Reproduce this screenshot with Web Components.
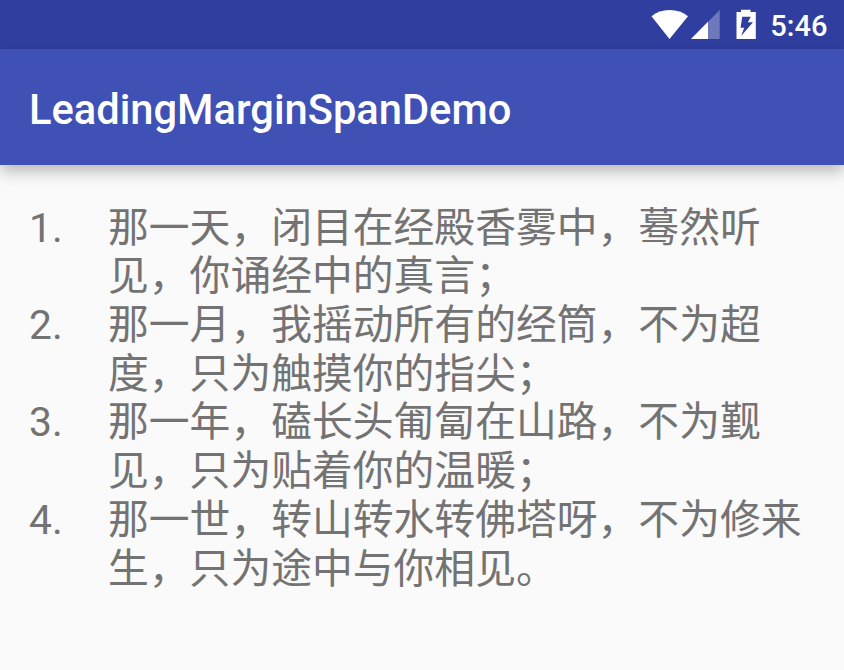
<!DOCTYPE html>
<html lang="zh-CN">
<head>
  <meta charset="UTF-8">
  <title>LeadingMarginSpanDemo</title>
  <style>
    body {
      margin: 0;
      min-height: 100vh;
      background-color: #fafafa;
      font-family: Roboto, "Noto Sans CJK SC", sans-serif;
    }
  </style>
</head>
<body>
  <app-screen>
    <status-bar slot="header">5:46</status-bar>
    <app-bar slot="header">LeadingMarginSpanDemo</app-bar>
    <verse-item number="1.">那一天，闭目在经殿香雾中，蓦然听见，你诵经中的真言；</verse-item>
    <verse-item number="2.">那一月，我摇动所有的经筒，不为超度，只为触摸你的指尖；</verse-item>
    <verse-item number="3.">那一年，磕长头匍匐在山路，不为觐见，只为贴着你的温暖；</verse-item>
    <verse-item number="4.">那一世，转山转水转佛塔呀，不为修来生，只为途中与你相见。</verse-item>
  </app-screen>

  <script>
    class StatusBar extends HTMLElement {
      constructor() {
        super()
        this.attachShadow({ mode: 'open' })
      }

      connectedCallback() {
        this.render()
      }

      render() {
        this.shadowRoot.innerHTML = `
          <style>
            :host {
              display: flex;
              justify-content: flex-end;
              align-items: center;
              box-sizing: border-box;
              height: 49px;
              padding-right: 16.6px;
              background-color: #303f9f;
              color: #fff;
              font-size: 29px;
              font-weight: 500;
              line-height: 49px;
            }
            svg {
              display: block;
              fill: currentColor;
            }
            .wifi {
              margin-right: 3px;
            }
            .signal {
              margin-right: 16px;
            }
            .battery {
              margin-right: 14.2px;
            }
            span {
              padding-top: 3px;
            }
          </style>
          <svg class="wifi" width="37" height="49" viewBox="0 0 37 49">
            <path d="M18.5 39 L0.5 16.2 C5.5 12 11.5 9.9 18.5 9.9 C25.5 9.9 32 12 37 16.2 Z" />
          </svg>
          <svg class="signal" width="29" height="49" viewBox="0 0 29 49">
            <path fill-opacity=".3" d="M0 39 L28.7 10 V39 Z" />
            <path d="M0 39 L17 21.8 V39 Z" />
          </svg>
          <svg class="battery" width="20" height="49" viewBox="0 0 20 49">
            <path fill-rule="evenodd" d="M0.5 12 H5 V9.7 H14.5 V12 H19.8 V39 H0.5 Z M6.2 16.8 L4.6 27.8 H8.2 L5.2 36 L17 22.2 H11.8 L14.8 16.8 Z" />
          </svg>
          <span><slot></slot></span>
        `
      }
    }

    customElements.define('status-bar', StatusBar)

    class AppBar extends HTMLElement {
      constructor() {
        super()
        this.attachShadow({ mode: 'open' })
      }

      connectedCallback() {
        this.render()
      }

      render() {
        this.shadowRoot.innerHTML = `
          <style>
            :host {
              display: flex;
              align-items: center;
              box-sizing: border-box;
              height: 116px;
              padding: 5px 29px 0;
              background-color: #3f51b5;
              box-shadow: 0 6px 15px rgba(0, 0, 0, 0.28);
              color: #fff;
            }
            h1 {
              margin: 0;
              font-size: 41.65px;
              font-weight: 500;
              line-height: 48px;
            }
          </style>
          <h1><slot></slot></h1>
        `
      }
    }

    customElements.define('app-bar', AppBar)

    class VerseItem extends HTMLElement {
      constructor() {
        super()
        this.attachShadow({ mode: 'open' })
      }

      connectedCallback() {
        this.render()
      }

      render() {
        this.shadowRoot.innerHTML = `
          <style>
            :host {
              display: grid;
              grid-template-columns: 79px 1fr;
              color: #737373;
              font-size: 40.8px;
              line-height: 48.7px;
            }
            p {
              margin: 0;
              text-spacing-trim: space-all;
            }
          </style>
          <span>${this.getAttribute('number')}</span>
          <p><slot></slot></p>
        `
      }
    }

    customElements.define('verse-item', VerseItem)

    class AppScreen extends HTMLElement {
      constructor() {
        super()
        this.attachShadow({ mode: 'open' })
      }

      connectedCallback() {
        this.render()
      }

      render() {
        this.shadowRoot.innerHTML = `
          <style>
            :host {
              display: flex;
              flex-direction: column;
              height: 670px;
              overflow: hidden;
            }
            main {
              padding: 38.6px 29px 0;
            }
          </style>
          <header><slot name="header"></slot></header>
          <main><slot></slot></main>
        `
      }
    }

    customElements.define('app-screen', AppScreen)
  </script>
</body>
</html>
